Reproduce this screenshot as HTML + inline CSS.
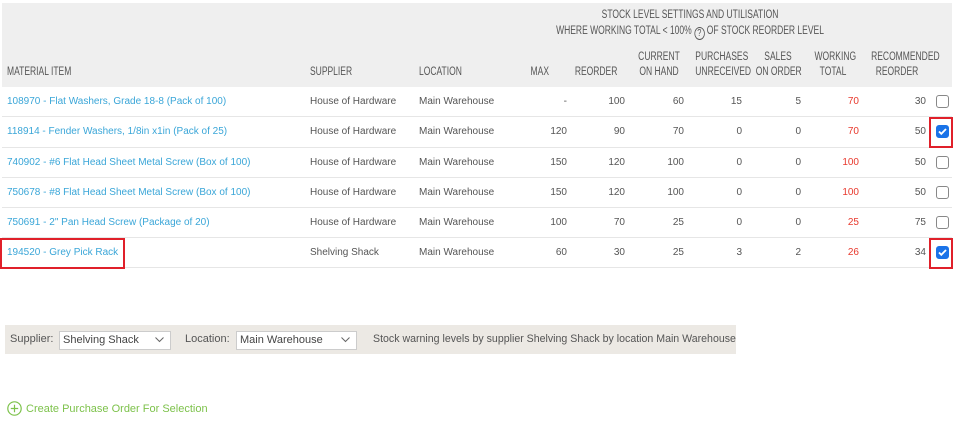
<!DOCTYPE html>
<html><head><meta charset="utf-8"><style>
*{margin:0;padding:0;box-sizing:border-box}
body{width:960px;height:435px;background:#fff;position:relative;font-family:"Liberation Sans",sans-serif;font-size:10px;color:#555;overflow:hidden}
.hd{position:absolute;left:2px;top:3px;width:950px;height:84px;background:#efefef}
.h{position:absolute;font-family:"Liberation Sans",sans-serif;font-size:11.5px;color:#555;line-height:15px;white-space:nowrap;transform:scaleX(.74);transform-origin:left center}
.r{text-align:right}
.h.r{transform-origin:right center}
.c{text-align:center}
.h.c{transform-origin:center center}
.row{position:absolute;left:2px;width:950px;height:30px;border-bottom:1px solid #e6e6e6}
.t{position:absolute;top:9px;white-space:nowrap;line-height:12px}
.a{color:#3aa6d8}
.red{color:#e8392d}
.cb{position:absolute;left:934px;top:8px;width:13px;height:13px;border:1px solid #888;border-radius:3px;background:#fff}
.cb.on{background:#1a73e8;border-color:#1a73e8}
.box{position:absolute;border:2px solid #e0202a}
.bar{position:absolute;left:5px;top:325px;width:731px;height:29px;background:#ece9e4}
.sel{position:absolute;top:6px;height:19px;background:#fff;border:1px solid #ccc;font-size:11px;line-height:17px;padding-left:3px;color:#444}
.sel svg{position:absolute;right:6px;top:5px}
</style></head><body>
<div class="hd"></div>
<div class="h c" style="left:500px;top:8px;width:380px">STOCK LEVEL SETTINGS AND UTILISATION</div>
<div class="h c" style="left:500px;top:24px;width:380px">WHERE WORKING TOTAL &lt; 100% <span style="display:inline-block;width:14px;height:13px;border:1px solid #555;border-radius:50%;font-size:10px;line-height:11px;vertical-align:-2px">?</span> OF STOCK REORDER LEVEL</div>
<div class="h" style="left:7px;top:65px">MATERIAL ITEM</div>
<div class="h" style="left:310px;top:65px">SUPPLIER</div>
<div class="h" style="left:419px;top:65px">LOCATION</div>
<div class="h r" style="left:500px;width:49px;top:65px">MAX</div>
<div class="h r" style="left:560px;width:57px;top:65px">REORDER</div>
<div class="h c" style="left:630px;width:58px;top:50px">CURRENT<br>ON HAND</div>
<div class="h c" style="left:688px;width:56px;top:50px">PURCHASES<br>UNRECEIVED</div>
<div class="h c" style="left:748px;width:60px;top:50px">SALES<br>ON ORDER</div>
<div class="h c" style="left:808px;width:50px;top:50px">WORKING<br>TOTAL</div>
<div class="h c" style="left:862px;width:70px;top:50px">RECOMMENDED<br>REORDER</div>

<div class="row" style="top:87px">
<span class="t a" style="left:5px">108970 - Flat Washers, Grade 18-8 (Pack of 100)</span>
<span class="t" style="left:308px">House of Hardware</span><span class="t" style="left:417px">Main Warehouse</span>
<span class="t r" style="right:385px">-</span><span class="t r" style="right:327px">100</span><span class="t r" style="right:268px">60</span><span class="t r" style="right:210px">15</span><span class="t r" style="right:151px">5</span><span class="t r red" style="right:93px">70</span><span class="t r" style="right:26px">30</span>
<div class="cb"></div></div>
<div class="row" style="top:117px;height:31px">
<span class="t a" style="left:5px">118914 - Fender Washers, 1/8in x1in (Pack of 25)</span>
<span class="t" style="left:308px">House of Hardware</span><span class="t" style="left:417px">Main Warehouse</span>
<span class="t r" style="right:385px">120</span><span class="t r" style="right:327px">90</span><span class="t r" style="right:268px">70</span><span class="t r" style="right:210px">0</span><span class="t r" style="right:151px">0</span><span class="t r red" style="right:93px">70</span><span class="t r" style="right:26px">50</span>
<div class="cb on"><svg width="11" height="11" viewBox="0 0 11 11"><path d="M2 5.5l2.3 2.3L9 3" stroke="#fff" stroke-width="1.8" fill="none"/></svg></div></div>
<div class="row" style="top:148px">
<span class="t a" style="left:5px">740902 - #6 Flat Head Sheet Metal Screw (Box of 100)</span>
<span class="t" style="left:308px">House of Hardware</span><span class="t" style="left:417px">Main Warehouse</span>
<span class="t r" style="right:385px">150</span><span class="t r" style="right:327px">120</span><span class="t r" style="right:268px">100</span><span class="t r" style="right:210px">0</span><span class="t r" style="right:151px">0</span><span class="t r red" style="right:93px">100</span><span class="t r" style="right:26px">50</span>
<div class="cb"></div></div>
<div class="row" style="top:178px">
<span class="t a" style="left:5px">750678 - #8 Flat Head Sheet Metal Screw (Box of 100)</span>
<span class="t" style="left:308px">House of Hardware</span><span class="t" style="left:417px">Main Warehouse</span>
<span class="t r" style="right:385px">150</span><span class="t r" style="right:327px">120</span><span class="t r" style="right:268px">100</span><span class="t r" style="right:210px">0</span><span class="t r" style="right:151px">0</span><span class="t r red" style="right:93px">100</span><span class="t r" style="right:26px">50</span>
<div class="cb"></div></div>
<div class="row" style="top:208px">
<span class="t a" style="left:5px">750691 - 2" Pan Head Screw (Package of 20)</span>
<span class="t" style="left:308px">House of Hardware</span><span class="t" style="left:417px">Main Warehouse</span>
<span class="t r" style="right:385px">100</span><span class="t r" style="right:327px">70</span><span class="t r" style="right:268px">25</span><span class="t r" style="right:210px">0</span><span class="t r" style="right:151px">0</span><span class="t r red" style="right:93px">25</span><span class="t r" style="right:26px">75</span>
<div class="cb"></div></div>
<div class="row" style="top:238px">
<span class="t a" style="left:5px">194520 - Grey Pick Rack</span>
<span class="t" style="left:308px">Shelving Shack</span><span class="t" style="left:417px">Main Warehouse</span>
<span class="t r" style="right:385px">60</span><span class="t r" style="right:327px">30</span><span class="t r" style="right:268px">25</span><span class="t r" style="right:210px">3</span><span class="t r" style="right:151px">2</span><span class="t r red" style="right:93px">26</span><span class="t r" style="right:26px">34</span>
<div class="cb on"><svg width="11" height="11" viewBox="0 0 11 11"><path d="M2 5.5l2.3 2.3L9 3" stroke="#fff" stroke-width="1.8" fill="none"/></svg></div></div>

<div class="box" style="left:929px;top:117px;width:24px;height:31px"></div>
<div class="box" style="left:929px;top:238px;width:24px;height:31px"></div>
<div class="box" style="left:0px;top:238px;width:125px;height:31px"></div>

<div class="bar">
<span style="position:absolute;left:5px;top:8px;font-size:11px">Supplier:</span>
<div class="sel" style="left:54px;width:112px">Shelving Shack<svg width="9" height="6" viewBox="0 0 9 6"><path d="M.5 .5l4 4 4-4" stroke="#666" fill="none"/></svg></div>
<span style="position:absolute;left:180px;top:8px;font-size:11px">Location:</span>
<div class="sel" style="left:231px;width:121px">Main Warehouse<svg width="9" height="6" viewBox="0 0 9 6"><path d="M.5 .5l4 4 4-4" stroke="#666" fill="none"/></svg></div>
<span style="position:absolute;left:368px;top:8px;font-size:10.6px;white-space:nowrap">Stock warning levels by supplier Shelving Shack by location Main Warehouse</span>
</div>

<svg style="position:absolute;left:7px;top:401px" width="15" height="15" viewBox="0 0 15 15"><circle cx="7.5" cy="7.5" r="6.7" stroke="#7dc24b" stroke-width="1.2" fill="none"/><path d="M7.5 3.8v7.4M3.8 7.5h7.4" stroke="#7dc24b" stroke-width="1.2"/></svg>
<span style="position:absolute;left:26px;top:403px;font-size:11px;color:#7dc24b;white-space:nowrap">Create Purchase Order For Selection</span>
</body></html>
